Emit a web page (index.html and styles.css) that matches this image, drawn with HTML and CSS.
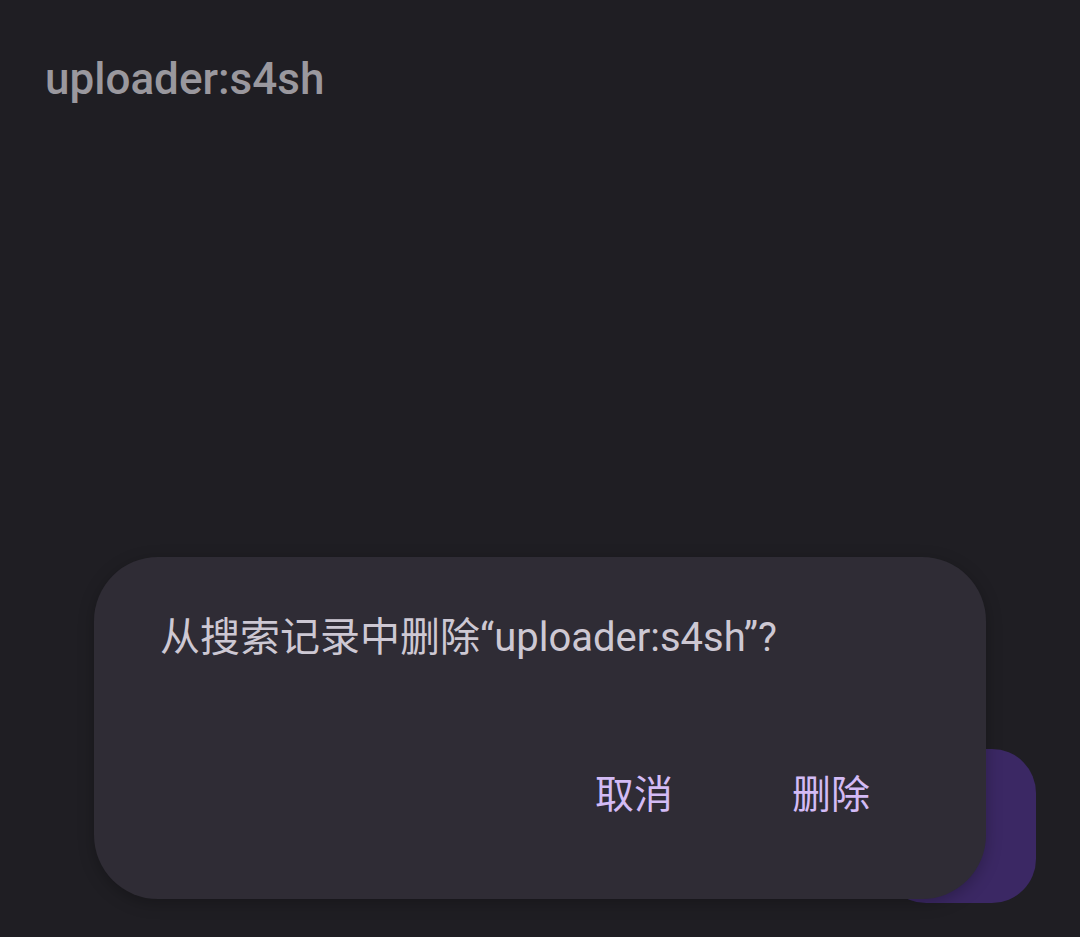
FILE: index.html
```html
<!DOCTYPE html>
<html lang="zh">
<head>
<meta charset="utf-8">
<title>搜索记录</title>
<link rel="stylesheet" href="styles.css">
</head>
<body>
<div class="screen">
  <header class="header">
    <h1 class="title">uploader:s4sh</h1>
  </header>
  <div class="fab" aria-hidden="true"></div>
  <div class="dialog" role="dialog">
    <p class="dialog-text">从搜索记录中删除“uploader:s4sh”?</p>
    <div class="dialog-actions">
      <button class="btn">取消</button>
      <button class="btn">删除</button>
    </div>
  </div>
</div>
</body>
</html>
```

FILE: styles.css
```css
html, body {
  margin: 0;
  padding: 0;
  background: #1f1e23;
}
.screen {
  position: relative;
  width: 1080px;
  height: 937px;
  overflow: hidden;
  background: #1f1e23;
  font-family: Roboto, "Noto Sans CJK SC", sans-serif;
}
.header {
  padding: 49px 45px 0;
}
.title {
  margin: 0;
  font-family: Roboto, "Noto Sans CJK SC", sans-serif;
  font-weight: 500;
  font-size: 44px;
  line-height: 60px;
  color: #9a989e;
  letter-spacing: 0;
}
.fab {
  position: absolute;
  left: 882px;
  top: 749px;
  width: 154px;
  height: 154px;
  border-radius: 44px;
  background: #3b2864;
}
.dialog {
  position: absolute;
  left: 94px;
  top: 557px;
  width: 892px;
  height: 342px;
  box-sizing: border-box;
  border-radius: 64px;
  background: #2f2c35;
  box-shadow: 0 4px 16px rgba(0, 0, 0, 0.25);
  padding: 53px 0 0 66px;
  display: flex;
  flex-direction: column;
}
.dialog-text {
  margin: 0;
  font-size: 40px;
  line-height: 56px;
  color: #cdc8d3;
  font-family: Roboto, "Noto Sans CJK SC", sans-serif;
}
.dialog-actions {
  display: flex;
  justify-content: flex-end;
  gap: 59px;
  margin-top: 101px;
  padding-right: 86px;
}
.btn {
  border: 0;
  background: transparent;
  padding: 0 30px;
  margin: 0;
  font-family: Roboto, "Noto Sans CJK SC", sans-serif;
  font-size: 39px;
  line-height: 56px;
  color: #d3bbf5;
  cursor: pointer;
}
```
